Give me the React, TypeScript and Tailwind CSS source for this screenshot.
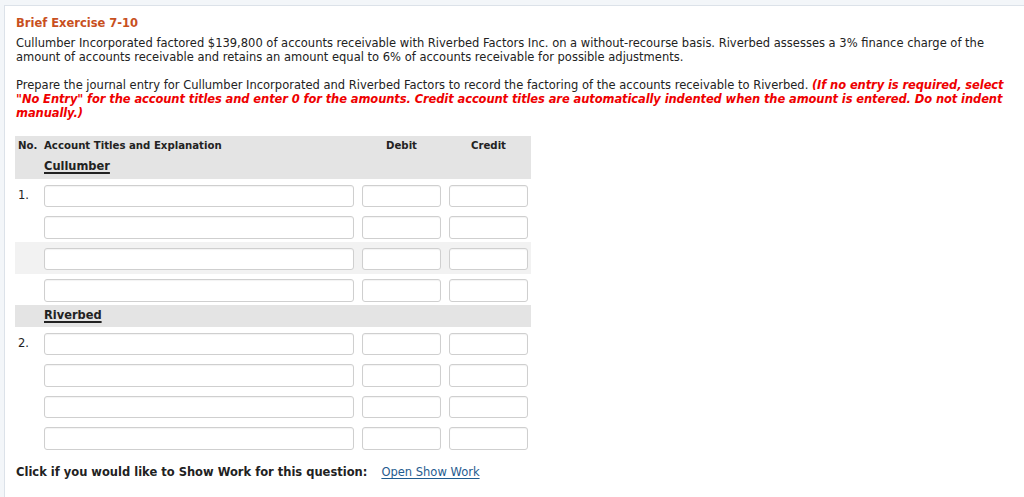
const body = "font-['DejaVu_Sans',Verdana,sans-serif] text-[11.5px] leading-[14px] text-[#222]";
const cond = "font-['DejaVu_Sans_Condensed','DejaVu_Sans',Tahoma,sans-serif] text-[11.3px] leading-[14px] font-bold text-[#222]";
const subhead = "font-['DejaVu_Sans_Condensed','DejaVu_Sans',Tahoma,sans-serif] text-[12.7px] leading-[14px] font-bold text-[#222]";

function Box({ width, className = '' }: { width: string; className?: string }) {
  return (
    <div
      className={`${width} ${className} h-[22.5px] bg-white border border-[#cfcfcf] rounded-[3px] shadow-[inset_0_1px_1px_rgba(0,0,0,0.05)]`}
    />
  );
}

function EntryRow({ num, striped }: { num?: string; striped?: boolean }) {
  return (
    <div className={`flex h-[31.5px] pt-[5.5px] ${striped ? 'bg-[#f2f2f2]' : ''}`}>
      <div className={`w-[29px] pl-[3px] pt-[3px] ${body} text-[#1b1b2b]`}>{num}</div>
      <Box width="w-[310px]" />
      <Box width="w-[79px]" className="ml-[8px]" />
      <Box width="w-[79px]" className="ml-[8px]" />
    </div>
  );
}

function Section({ title, num, header }: { title: string; num: string; header?: boolean }) {
  return (
    <>
      {header ? (
        <div className="bg-[#e4e4e4] h-[43px] pt-[3px]">
          <div className={`flex ${cond}`}>
            <div className="w-[29px] pl-[3px]">No.</div>
            <div className="w-[310px]">Account Titles and Explanation</div>
            <div className="w-[79px] ml-[8px] text-center">Debit</div>
            <div className="w-[79px] ml-[8px] text-center">Credit</div>
          </div>
          <div className={`mt-[6px] pl-[29px] ${subhead}`}>
            <span className="underline underline-offset-[2px] decoration-[1.5px]">{title}</span>
          </div>
        </div>
      ) : (
        <div className="bg-[#e4e4e4] h-[22px] pt-[3px]">
          <div className={`pl-[29px] ${subhead}`}>
            <span className="underline underline-offset-[2px] decoration-[1.5px]">{title}</span>
          </div>
        </div>
      )}
      <EntryRow num={num} />
      <EntryRow />
      <EntryRow striped={header} />
      <EntryRow />
    </>
  );
}

export default function App() {
  return (
    <div className="min-h-screen bg-[#f3f6f9] pt-[5px] pl-[4px]">
      <div className={`bg-white border-t border-l border-[#dce2e9] min-h-[492px] pl-[11px] pr-[8px] pt-[10px] ${body}`}>
        <h1 className="font-bold text-[#c8501e] text-[11.5px] leading-[14px]">Brief Exercise 7-10</h1>

        <p className="mt-[6px]">
          Cullumber Incorporated factored $139,800 of accounts receivable with Riverbed Factors Inc. on a without-recourse basis. Riverbed assesses a 3% finance charge of the amount of accounts receivable and retains an amount equal to 6% of accounts receivable for possible adjustments.
        </p>

        <p className="mt-[14px]">
          Prepare the journal entry for Cullumber Incorporated and Riverbed Factors to record the factoring of the accounts receivable to Riverbed.{' '}
          <span className="font-bold italic text-[#ee0000] tracking-[-0.1px]">
            (If no entry is required, select "No Entry" for the account titles and enter 0 for the amounts. Credit account titles are automatically indented when the amount is entered. Do not indent manually.)
          </span>
        </p>

        <div className="mt-[16px] ml-[-1px] w-[516px]">
          <Section title="Cullumber" num="1." header />
          <Section title="Riverbed" num="2." />
        </div>

        <div className="mt-[12px] flex">
          <span className="font-bold">Click if you would like to Show Work for this question:</span>
          <a href="#" className="ml-[14px] text-[#1f5c8f] underline underline-offset-[2px]">
            Open Show Work
          </a>
        </div>
      </div>
    </div>
  );
}
